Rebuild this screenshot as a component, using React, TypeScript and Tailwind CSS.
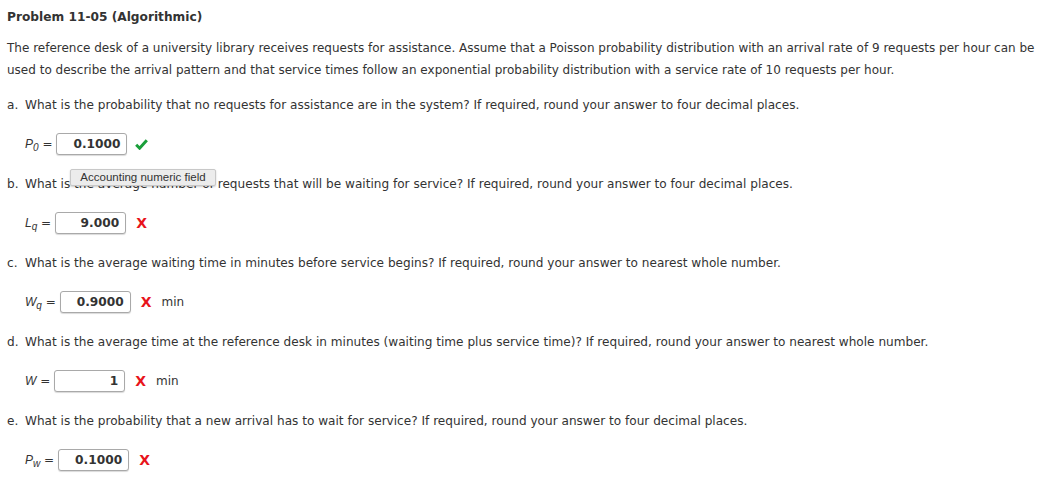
import React from "react";

const font = "font-['Verdana','DejaVu_Sans',sans-serif]";

function Answer({
  label,
  sub,
  value,
  status,
  unit,
}: {
  label: string;
  sub?: string;
  value: string;
  status: "ok" | "bad";
  unit?: string;
}) {
  return (
    <div className="mt-[17px] flex h-[22px] items-center pl-[18px]">
      <span className="text-[12px] text-[#333]">
        <i className="font-['Liberation_Sans',Arial,sans-serif]">
          {label}
          {sub && <sub className="text-[10px]">{sub}</sub>}
        </i>{" "}
        =
      </span>
      <span className="ml-[4px] flex h-[22px] w-[71px] items-center justify-end rounded-[3px] border border-[#a9a9a9] bg-white pr-[6px] text-[12.2px] font-bold text-[#333] shadow-[0_1px_1px_rgba(0,0,0,0.15)]">
        {value}
      </span>
      {status === "ok" ? (
        <svg className="ml-[8px]" width="13" height="11" viewBox="0 0 13 11">
          <path d="M1.2 5.8 L4.6 9.2 L11.8 1.2" fill="none" stroke="#1a9f3a" strokeWidth="3" />
        </svg>
      ) : (
        <span className="ml-[10px] text-[14px] font-bold leading-none text-[#e8141b]">X</span>
      )}
      {unit && <span className="ml-[10px] text-[12px] text-[#333]">{unit}</span>}
    </div>
  );
}

function Question({ letter, children }: { letter: string; children: React.ReactNode }) {
  return (
    <div className="relative mt-[18px] flex h-[22px] items-center text-[12.1px] text-[#333]">
      <span className="w-[18px]">{letter}</span>
      <span>{children}</span>
    </div>
  );
}

export default function App() {
  return (
    <div className={`${font} h-[477px] w-[1046px] overflow-hidden bg-white pl-[7px] leading-[22px] text-[#333]`}>
      <div className="mt-[6px] text-[12.2px] font-bold">Problem 11-05 (Algorithmic)</div>
      <p className="mt-[9px] text-[12px]">
        The reference desk of a university library receives requests for assistance. Assume that a Poisson probability distribution with an arrival rate of 9 requests per hour can be used to describe the arrival pattern and that service times follow an exponential probability distribution with a service rate of 10 requests per hour.
      </p>

      <div className="mt-[13px] flex h-[22px] items-center text-[12.1px]">
        <span className="w-[18px]">a.</span>
        <span>What is the probability that no requests for assistance are in the system? If required, round your answer to four decimal places.</span>
      </div>
      <Answer label="P" sub="0" value="0.1000" status="ok" />

      <Question letter="b.">
        What is the average number of requests that will be waiting for service? If required, round your answer to four decimal places.
        <span className="absolute left-[63px] top-[-4px] w-[146px] rounded-[2px] border border-[#c8c8c8] bg-[#ececec] text-center font-['Liberation_Sans',Arial,sans-serif] text-[11.5px] leading-[15px] text-[#333] shadow-[0_1px_2px_rgba(0,0,0,0.2)]">
          Accounting numeric field
        </span>
      </Question>
      <Answer label="L" sub="q" value="9.000" status="bad" />

      <Question letter="c.">
        What is the average waiting time in minutes before service begins? If required, round your answer to nearest whole number.
      </Question>
      <Answer label="W" sub="q" value="0.9000" status="bad" unit="min" />

      <Question letter="d.">
        What is the average time at the reference desk in minutes (waiting time plus service time)? If required, round your answer to nearest whole number.
      </Question>
      <Answer label="W" value="1" status="bad" unit="min" />

      <Question letter="e.">
        What is the probability that a new arrival has to wait for service? If required, round your answer to four decimal places.
      </Question>
      <Answer label="P" sub="w" value="0.1000" status="bad" />
    </div>
  );
}
